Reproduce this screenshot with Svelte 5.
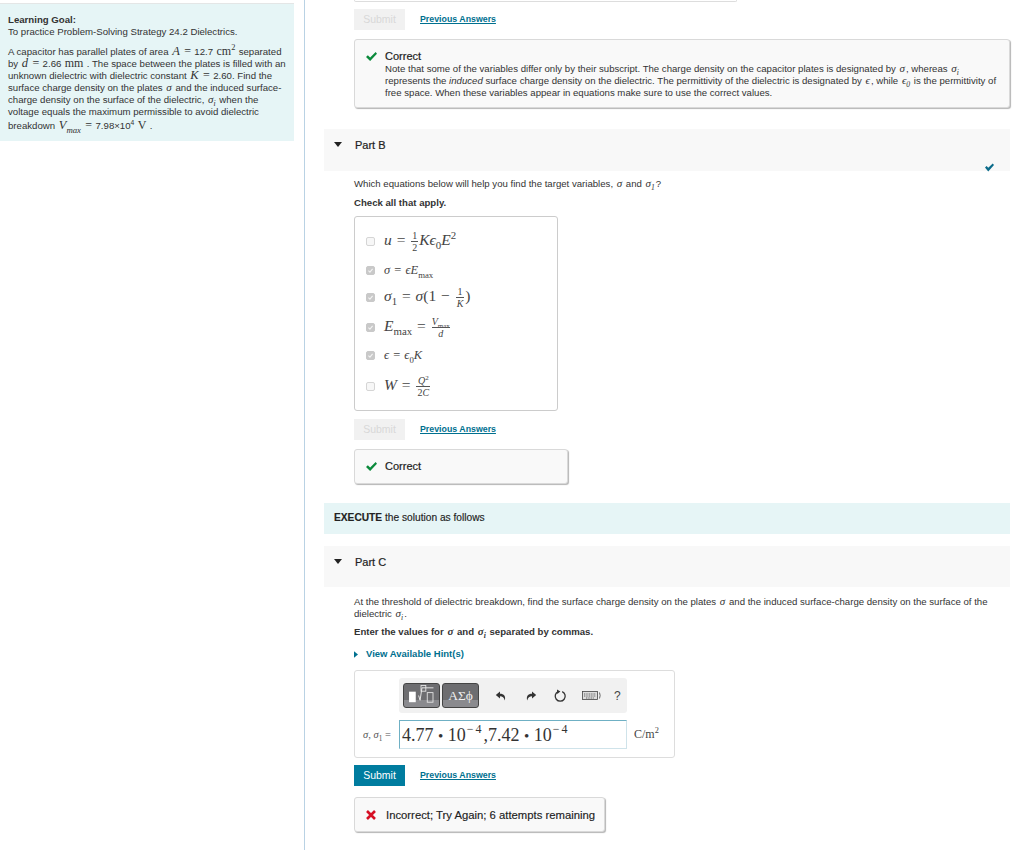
<script>
  const eqs = [
    { on: false, h: 36, id: 'u' },
    { on: true, h: 22, id: 's' },
    { on: true, h: 32, id: 's1' },
    { on: true, h: 28, id: 'e' },
    { on: true, h: 28, id: 'k' },
    { on: false, h: 34, id: 'w' }
  ];
</script>

<div class="page">
  <aside class="side">
    <div class="goal">
      <p class="g1"><b>Learning Goal:</b><br />To practice Problem-Solving Strategy 24.2 Dielectrics.</p>
      <p class="g2">A capacitor has parallel plates of area <i class="m big">A</i> <span class="m big">=</span> 12.7 <span class="m big">cm<sup>2</sup></span> separated<br />by <i class="m big">d</i> <span class="m big">=</span> 2.66 <span class="m big">mm</span> . The space between the plates is filled with an<br />unknown dielectric with dielectric constant <i class="m big">K</i> <span class="m big">=</span> 2.60. Find the<br />surface charge density on the plates <i class="m">σ</i> and the induced surface-<br />charge density on the surface of the dielectric, <i class="m">σ<sub>i</sub></i> when the<br />voltage equals the maximum permissible to avoid dielectric<br /><span class="last">breakdown <i class="m big">V<sub>max</sub></i> <span class="m big">=</span> 7.98×10<sup>4</sup> <span class="m big">V</span> .</span></p>
    </div>
  </aside>

  <main class="main">
    <div class="stub"></div>
    <div class="actions a1">
      <button class="submit off">Submit</button>
      <a href="#a" class="prev">Previous Answers</a>
    </div>
    <div class="fb wide">
      <svg class="chk" viewBox="0 0 14 12"><path d="M1 6.5 L3 4.5 L5.5 7 L11.5 1 L13 3 L5.5 11 Z" fill="#0b8a3c"/></svg>
      <div>
        <div class="fbt">Correct</div>
        <div class="fbb">Note that some of the variables differ only by their subscript. The charge density on the capacitor plates is designated by <i class="m">σ</i>, whereas <i class="m">σ<sub>i</sub></i><br />represents the <i>induced</i> surface charge density on the dielectric. The permittivity of the dielectric is designated by <i class="m">ϵ</i>, while <i class="m">ϵ<sub>0</sub></i> is the permittivity of<br />free space. When these variables appear in equations make sure to use the correct values.</div>
      </div>
    </div>

    <section class="part pb">
      <svg class="tri" viewBox="0 0 8 5"><path d="M0 0H8L4 5Z" fill="#222"/></svg>
      <span>Part B</span>
      <svg class="tick" viewBox="0 0 12 10"><path d="M1 5 L2.8 3.4 L4.6 5.4 L9.6 0.6 L11 2.2 L4.6 9.4 Z" fill="#0b6b8a"/></svg>
    </section>
    <div class="body">
      <p class="q1">Which equations below will help you find the target variables, <i class="m">σ</i> and <i class="m">σ<sub>1</sub></i>?</p>
      <p class="q2"><b>Check all that apply.</b></p>
      <div class="eqbox">
        {#each eqs as e}
          <div class="eq" style="height:{e.h}px">
            <span class="cb" class:on={e.on}>
              {#if e.on}<svg viewBox="0 0 10 10"><path d="M2 5.2 L4.2 7.4 L8 2.6" fill="none" stroke="#f4f4f4" stroke-width="1.5"/></svg>{/if}
            </span>
            {#if e.id === 'u'}
              <span class="f lg"><i>u</i> = <span class="frac"><span>1</span><span class="bar">2</span></span><i>K</i><i>ϵ</i><sub>0</sub><i>E</i><sup>2</sup></span>
            {:else if e.id === 's'}
              <span class="f"><i>σ</i> = <i>ϵE</i><sub>max</sub></span>
            {:else if e.id === 's1'}
              <span class="f lg"><i>σ</i><sub>1</sub> = <i>σ</i>(1 − <span class="frac"><span>1</span><span class="bar"><i>K</i></span></span>)</span>
            {:else if e.id === 'e'}
              <span class="f lg"><i>E</i><sub>max</sub> = <span class="frac"><span><i>V</i><sub>max</sub></span><span class="bar"><i>d</i></span></span></span>
            {:else if e.id === 'k'}
              <span class="f"><i>ϵ</i> = <i>ϵ</i><sub>0</sub><i>K</i></span>
            {:else}
              <span class="f lg"><i>W</i> = <span class="frac"><span><i>Q</i><sup>2</sup></span><span class="bar">2<i>C</i></span></span></span>
            {/if}
          </div>
        {/each}
      </div>
      <div class="actions a2">
        <button class="submit off">Submit</button>
        <a href="#a" class="prev">Previous Answers</a>
      </div>
      <div class="fb small">
        <svg class="chk" viewBox="0 0 14 12"><path d="M1 6.5 L3 4.5 L5.5 7 L11.5 1 L13 3 L5.5 11 Z" fill="#0b8a3c"/></svg>
        <div class="fbt">Correct</div>
      </div>
    </div>

    <div class="exec"><b>EXECUTE</b> the solution as follows</div>

    <section class="part pc">
      <svg class="tri" viewBox="0 0 8 5"><path d="M0 0H8L4 5Z" fill="#222"/></svg>
      <span>Part C</span>
    </section>
    <div class="body">
      <p class="q3">At the threshold of dielectric breakdown, find the surface charge density on the plates <i class="m">σ</i> and the induced surface-charge density on the surface of the dielectric <i class="m">σ<sub>i</sub></i>.</p>
      <p class="q4"><b>Enter the values for <i class="m">σ</i> and <i class="m">σ<sub>i</sub></i> separated by commas.</b></p>
      <a href="#h" class="hint"><svg viewBox="0 0 5 8"><path d="M0 0L5 4L0 8Z" fill="#00708f"/></svg>View Available Hint(s)</a>

      <div class="answer">
        <div class="toolbar">
          <div class="tool t1">
            <svg viewBox="0 0 36 24" width="35" height="23">
              <rect x="5" y="8" width="7" height="11" fill="#fff"/>
              <rect x="17.5" y="1.5" width="5" height="6" fill="none" stroke="#e8e8e8" stroke-width="0.9"/>
              <path d="M15 12l1.5 5 2-13h12" fill="none" stroke="#e8e8e8" stroke-width="1"/>
              <rect x="24" y="9" width="6" height="10" fill="none" stroke="#e8e8e8" stroke-width="0.9"/>
            </svg>
          </div>
          <div class="tool t2">ΑΣϕ</div>
          <div class="tgroup">
            <svg class="ic" style="margin-left:14px" viewBox="0 0 12 12"><path d="M5 1.5 L0.8 5 L5 8.5 V6.2 C7.5 6.2 9 7.2 9.8 10.5 C11 6.5 9 3.8 5 3.8 Z" fill="#333"/></svg>
            <svg class="ic" style="margin-left:18px" viewBox="0 0 12 12"><path d="M7 1.5 L11.2 5 L7 8.5 V6.2 C4.5 6.2 3 7.2 2.2 10.5 C1 6.5 3 3.8 7 3.8 Z" fill="#333"/></svg>
            <svg class="ic rs" viewBox="0 0 13 13"><path d="M8.2 2.6 A5 5 0 1 1 4.2 2.6" fill="none" stroke="#333" stroke-width="1.3"/><path d="M3 0.4 L6.4 2.4 L3.2 5 Z" fill="#333"/></svg>
            <svg class="kb" viewBox="0 0 20 9"><rect x="0.5" y="0.5" width="15" height="8" fill="#ddd" stroke="#444" stroke-width="0.8"/><path d="M2 3h12M2 5h12M4 7h8" stroke="#555" stroke-width="0.9" stroke-dasharray="1 .7"/><path d="M17.5 1.5q1.3 3 0 6" fill="none" stroke="#444" stroke-width=".8"/></svg>
            <span class="help">?</span>
          </div>
        </div>
        <div class="inrow">
          <span class="lbl"><i>σ</i>, <i>σ</i><sub>1</sub> =</span>
          <div class="input">4.77 <span class="dot">•</span> 10<sup>−4</sup>,7.42 <span class="dot">•</span> 10<sup>−4</sup></div>
          <span class="unit">C/m<sup>2</sup></span>
        </div>
      </div>

      <div class="actions a3">
        <button class="submit">Submit</button>
        <a href="#a" class="prev">Previous Answers</a>
      </div>
      <div class="fb bad">
        <svg class="x" viewBox="0 0 10 10"><path d="M1 1 L9 9 M9 1 L1 9" stroke="#d60f24" stroke-width="2.6"/></svg>
        <div class="fbx">Incorrect; Try Again; 6 attempts remaining</div>
      </div>
    </div>
  </main>
</div>

<style>
  :global(body) { margin: 0; background: #fff; }
  .page { display: flex; width: 1024px; height: 850px; overflow: hidden; font-family: "Liberation Sans", Arial, sans-serif; font-size: 10px; color: #333; }
  .side { flex: none; box-sizing: border-box; border-right: 1px solid #b9d2e4; width: 305px; padding: 3px 10px 0 0; }
  .goal { background: #e6f5f6; border-top: 1px solid #e4e6e6; height: 138px; box-sizing: border-box; padding: 10px 8px 0; line-height: 12px; font-size: 9.65px; }
  .goal p { margin: 0; white-space: nowrap; }
  .g2 { margin-top: 8px !important; line-height: 12px; }
  .last { display: block; margin-top: 2px; }
  .m { font-family: "Liberation Serif", serif; }
  .big { font-size: 12px; line-height: 0; margin: 0 0.7px; }
  i.m { margin: 0 1px; font-size: 11px; line-height: 0; }
  i.big { font-size: 12.5px; }
  sub, sup { font-size: 70%; line-height: 0; }
  .main { flex: none; width: 719px; box-sizing: border-box; padding: 0 14px 0 19px; }
  .stub { margin-left: 30px; width: 383px; height: 2px; border: 1px solid #ddd; border-top: 0; border-radius: 0 0 4px 4px; box-sizing: border-box; }
  .actions { display: flex; align-items: center; }
  .a1 { margin: 7px 0 0 30px; }
  .a2 { margin-top: 8px; }
  .a3 { margin-top: 7px; }
  .submit { width: 51px; height: 21px; padding: 0 0 1px; border: 0; background: #007c9f; color: #fff; font: 10.5px "Liberation Sans", sans-serif; }
  .submit.off { background: #f1f1f1; color: #d8d8d8; }
  .prev { margin-left: 15px; padding-bottom: 2px; color: #00708f; font-size: 8.8px; font-weight: bold; text-decoration: underline; }
  .fb { position: relative; box-sizing: border-box; background: #f9f9f9; border: 1px solid #d9d9d9; border-radius: 3px; box-shadow: 1px 1px 1px #b5b5b5; display: flex; }
  .wide { margin: 9px 0 0 30px; height: 69px; width: 656px; padding: 10px 8px 0 10px; }
  .chk { width: 13px; height: 11px; flex: none; margin: 1px 7px 0 0; }
  .fbt { font-size: 11px; color: #222; line-height: 12px; -webkit-text-stroke: 0.2px #222; }
  .fbb { margin-top: 1px; font-size: 9.62px; line-height: 12px; white-space: nowrap; }
  .part { position: relative; background: #f8f8f8; display: flex; align-items: flex-start; font-size: 11px; color: #222; -webkit-text-stroke: 0.2px #222; box-sizing: border-box; height: 42px; }
  .pb { margin-top: 21px; padding-top: 10px; }
  .pc { margin-top: 12px; height: 41px; padding-top: 10px; }
  .tri { width: 8px; height: 5px; margin: 3px 13px 0 10px; flex: none; }
  .part span { line-height: 12px; }
  .tick { position: absolute; right: 15px; top: 34px; width: 11px; height: 9px; }
  .body { padding-left: 30px; }
  .body p { margin: 0; font-size: 9.62px; }
  .q1 { margin-top: 6px !important; line-height: 14px; }
  .q2 { margin-top: 5px !important; line-height: 14px; }
  .eqbox { margin-top: 6px; width: 204px; height: 195px; box-sizing: border-box; border: 1px solid #ccc; border-radius: 3px; padding: 6px 0 0 11px; }
  .eq { display: flex; align-items: center; }
  .cb { width: 9px; height: 9px; box-sizing: border-box; border: 1px solid #d5d5d5; border-radius: 2px; background: #f7f7f7; margin-right: 9px; flex: none; display: flex; }
  .cb.on { background: #c9c9c9; border-color: #c9c9c9; }
  .cb svg { width: 100%; height: 100%; }
  .f { font-family: "Liberation Serif", serif; font-size: 12.5px; color: #444; white-space: pre; word-spacing: 1px; }
  .f.lg { font-size: 15.5px; word-spacing: 1px; }
  .frac { display: inline-flex; flex-direction: column; align-items: center; vertical-align: middle; margin: 0 1px; line-height: 11px; font-size: 10px; word-spacing: 0; }
  .bar { border-top: 1px solid #555; padding: 0 1px; align-self: stretch; text-align: center; }
  .small { margin-top: 9px; width: 214px; height: 35px; padding: 10px; }
  .exec { margin-top: 19px; background: #e6f5f6; height: 31px; line-height: 30px; padding-left: 10px; color: #222; font-size: 10.2px; -webkit-text-stroke: 0.15px #222; }
  .exec b { font-weight: bold; }
  .q3 { margin-top: 9px !important; line-height: 12px; width: 640px; }
  .q4 { margin-top: 5px !important; line-height: 14px; }
  .hint { display: flex; align-items: center; margin-top: 8px; color: #00708f; font-size: 9.5px; font-weight: bold; line-height: 14px; text-decoration: none; }
  .hint svg { width: 4px; height: 7px; margin-right: 8px; }
  .answer { margin-top: 9px; width: 321px; height: 88px; box-sizing: border-box; border: 1px solid #ddd; border-radius: 3px; padding: 7px 0 0 0; }
  .toolbar { margin-left: 44px; width: 228px; height: 35px; background: #f1f1f1; border-radius: 3px; box-sizing: border-box; padding: 5px 4px; display: flex; align-items: center; gap: 2px; }
  .tool { height: 25px; border: 1px solid #444; border-radius: 3px; box-sizing: border-box; background: linear-gradient(#6d6d70 0 68%, #8a8a8e 68%); color: #f0f0f0; display: flex; align-items: center; justify-content: center; font-family: "Liberation Serif", serif; font-size: 13.5px; }
  .t1 { width: 37px; }
  .t2 { width: 37px; }
  .tgroup { display: flex; align-items: center; }
  .ic { width: 12px; height: 12px; }
  .rs { margin-left: 17px; width: 13px; height: 13px; }
  .kb { width: 20px; height: 9px; margin-left: 15px; }
  .help { margin-left: 12px; font-size: 12px; color: #444; }
  .inrow { display: flex; align-items: center; margin-top: 7px; }
  .lbl { font-family: "Liberation Serif", serif; font-size: 10.5px; width: 44px; padding-left: 8px; box-sizing: border-box; white-space: nowrap; color: #555; }
  .input { width: 228px; height: 29px; box-sizing: border-box; border: 1px solid #6fb0c4; border-bottom-color: #cfe3ea; border-right-color: #cfe3ea; font-family: "Liberation Serif", serif; font-size: 18px; color: #333; line-height: 29px; padding-left: 2px; white-space: nowrap; }
  .input sup { font-size: 12px; letter-spacing: 2px; margin-left: 1px; position: relative; top: -1px; }
  .dot { font-size: 15px; }
  .unit { margin-left: 7px; font-family: "Liberation Serif", serif; font-size: 12px; color: #444; }
  .bad { margin-top: 11px; width: 251px; height: 35px; align-items: center; padding-left: 11px; }
  .x { width: 10px; height: 10px; margin-right: 10px; flex: none; }
  .fbx { font-size: 11.3px; color: #222; -webkit-text-stroke: 0.15px #222; white-space: nowrap; }
</style>
